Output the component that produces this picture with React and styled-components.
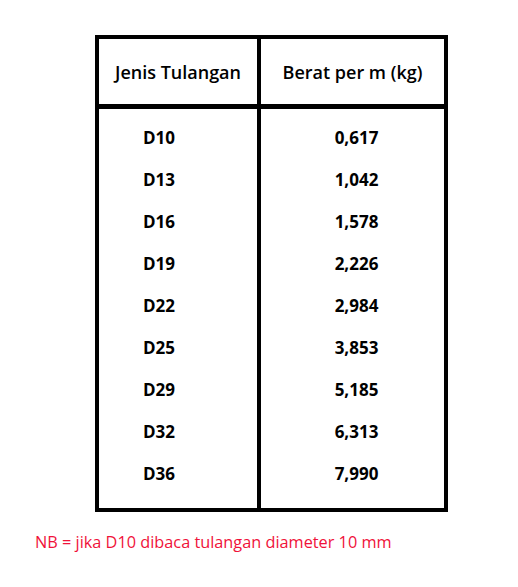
import React from 'react';
import styled, { createGlobalStyle } from 'styled-components';

const GlobalStyle = createGlobalStyle`
  body {
    margin: 0;
    background: #ffffff;
    font-family: "Open Sans", "Liberation Sans", sans-serif;
    color: #000000;
  }
`

const Page = styled.main`
  width: 518px;
  height: 587px;
  padding-top: 35px;
  box-sizing: border-box;
`

const TableWrap = styled.div`
  margin-left: 95px;
  width: 353px;
  box-sizing: border-box;
  border: 4px solid #000;
  display: grid;
  grid-template-columns: 162px 1fr;
`

const HeadCell = styled.div`
  height: 70px;
  box-sizing: border-box;
  border-bottom: 5px solid #000;
  border-right: ${props => props.$divider ? '4px solid #000' : 'none'};
  display: flex;
  align-items: center;
  justify-content: center;
  font-size: 18px;
  font-weight: 600;
  -webkit-text-stroke: 0;
`

const BodyCol = styled.div`
  display: flex;
  flex-direction: column;
  padding: 7px 0 14px;
  box-sizing: border-box;
  border-right: ${props => props.$divider ? '4px solid #000' : 'none'};
`

const Cell = styled.div`
  height: 42px;
  display: flex;
  align-items: center;
  justify-content: ${props => props.$left ? 'flex-start' : 'center'};
  padding-left: ${props => props.$left ? '44px' : '8px'};
  font-size: 17px;
  font-weight: 700;
`

const Note = styled.p`
  margin: 19px 0 0 35px;
  font-size: 16.3px;
  line-height: 22px;
  color: #f0123a;
`

const rows = [
  ['D10', '0,617'],
  ['D13', '1,042'],
  ['D16', '1,578'],
  ['D19', '2,226'],
  ['D22', '2,984'],
  ['D25', '3,853'],
  ['D29', '5,185'],
  ['D32', '6,313'],
  ['D36', '7,990'],
]

export default function App() {
  return (
    <>
      <GlobalStyle />
      <Page>
        <TableWrap>
          <HeadCell $divider>Jenis Tulangan</HeadCell>
          <HeadCell>Berat per m (kg)</HeadCell>
          <BodyCol $divider>
            {rows.map(r => <Cell key={r[0]} $left>{r[0]}</Cell>)}
          </BodyCol>
          <BodyCol>
            {rows.map(r => <Cell key={r[0]}>{r[1]}</Cell>)}
          </BodyCol>
        </TableWrap>
        <Note>NB = jika D10 dibaca tulangan diameter 10 mm</Note>
      </Page>
    </>
  )
}
